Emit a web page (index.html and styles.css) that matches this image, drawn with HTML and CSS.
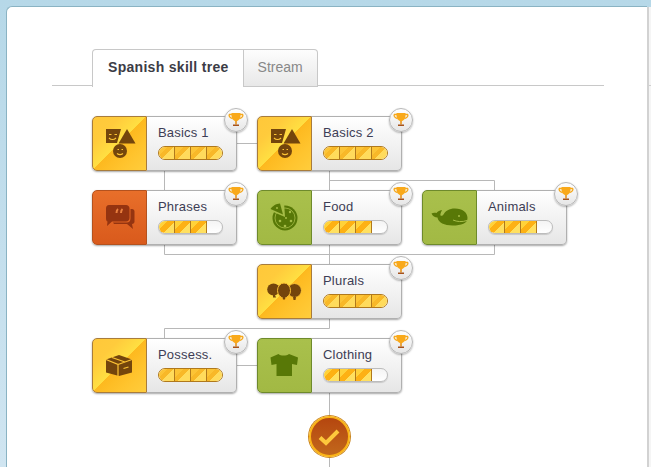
FILE: index.html
```html
<!DOCTYPE html>
<html lang="en">
<head>
  <meta charset="UTF-8">
  <meta name="viewport" content="width=device-width, initial-scale=1.0">
  <title>Spanish skill tree</title>
  <link rel="stylesheet" href="styles.css">
</head>
<body>
  <svg class="defs" width="0" height="0">
    <symbol id="trophy" viewBox="0 0 16 16">
      <path d="M1 2.500h3M12 2.500h3M1 2.500c0 2.600 1.500 3.600 3.600 4M15 2.500c0 2.600-1.500 3.600-3.600 4" fill="none" stroke="#f5a81c" stroke-width="1.300"/>
      <path d="M3.500 1h9v3c0 3-2 4.800-4.500 5.200C5.500 8.800 3.500 7 3.500 4z" fill="#f9a91a"/>
      <path d="M7.200 9h1.600v3.500H7.200z" fill="#e8941a"/>
      <path d="M5 12.500h6V14H5z" fill="#a5521c"/>
    </symbol>
    <symbol id="shapes" viewBox="0 0 54 54">
      <path class="fg" d="M14 13h15l-4 14H14z"/>
      <path class="fg" d="M35 13l8.500 14.500H26.500z"/>
      <circle class="fg" cx="28" cy="35" r="7"/>
      <path class="cut" d="M17 18.500h2.500M22.500 18.500h2.500M17 22c2 2 5 2 7 0M25.500 33.500h1.500M29.500 33.500h1.500M25 37.500c2 1.500 4 1.500 6 0"/>
    </symbol>
  </svg>

  <div class="window">
    <div class="panel">
      <div class="tabs">
        <a class="tab active">Spanish skill tree</a>
        <a class="tab">Stream</a>
      </div>

      <div class="tree">
        <svg class="lines" width="420" height="360">
          <path d="M145 27.500H165M72.500 55V138.500H402.500V64.500H237.500M237.500 55V148M237.500 200V212.500H72.500V222M145 249.500H165M237.500 277V360"/>
        </svg>

        <div class="skill c1">
          <div class="skill-icon gold">
            <svg viewBox="0 0 54 54"><use href="#shapes"/></svg>
          </div>
          <div class="skill-body">
            <div class="name">Basics 1</div>
            <div class="bar"><i></i><i></i><i></i><i></i></div>
          </div>
          <div class="badge"><svg><use href="#trophy"/></svg></div>
        </div>

        <div class="skill c2">
          <div class="skill-icon gold">
            <svg viewBox="0 0 54 54"><use href="#shapes"/></svg>
          </div>
          <div class="skill-body">
            <div class="name">Basics 2</div>
            <div class="bar"><i></i><i></i><i></i><i></i></div>
          </div>
          <div class="badge"><svg><use href="#trophy"/></svg></div>
        </div>

        <div class="skill c1">
          <div class="skill-icon orange">
            <svg viewBox="0 0 54 54">
              <path class="fg" d="M38.500 19h1.500c1.500 0 2.500 1 2.500 2.500v10c0 1.500-1 2.500-2.500 2.500l1 5-6-5H22l-1-1.500h14c2 0 3.500-1.500 3.500-4z"/>
              <path class="fg" d="M17 15h17c2 0 3.500 1.500 3.500 3.500V28c0 2-1.500 3.500-3.500 3.500H20l-5 4.500 .5-4.500c-1 0-1.500-1.500-1.500-3.500v-9.500c0-2 1-3.500 3-3.500z"/>
              <path class="cut-o" d="M26 19c-1 .8-1.500 1.800-1.500 4M30.500 19c-1 .8-1.500 1.800-1.500 4"/>
            </svg>
          </div>
          <div class="skill-body">
            <div class="name">Phrases</div>
            <div class="bar part"><i></i><i></i><i></i></div>
          </div>
          <div class="badge"><svg><use href="#trophy"/></svg></div>
        </div>

        <div class="skill c2">
          <div class="skill-icon green">
            <svg viewBox="0 0 54 54">
              <circle class="fg" cx="28" cy="28" r="12.500"/>
              <circle class="ring" cx="28" cy="28" r="10"/>
              <path class="wedge" d="M28 27L14 21 16 12 27 12z"/>
              <path class="fg" d="M26 24.500L13.500 19c1.500-2.500 5.500-5.500 9.500-5.500z"/>
              <circle class="dot" cx="23" cy="31" r="1.300"/>
              <circle class="dot" cx="28" cy="36" r="1.300"/>
              <circle class="dot" cx="34" cy="31" r="1.300"/>
              <circle class="dot" cx="33" cy="22" r="1.200"/>
              <circle class="dot" cx="20" cy="18" r="1"/>
              <circle class="dot" cx="29" cy="28" r="1"/>
            </svg>
          </div>
          <div class="skill-body">
            <div class="name">Food</div>
            <div class="bar part"><i></i><i></i><i></i></div>
          </div>
          <div class="badge"><svg><use href="#trophy"/></svg></div>
        </div>

        <div class="skill c3">
          <div class="skill-icon green">
            <svg viewBox="0 0 54 54">
              <path class="fg" d="M45.500 28c0-5.500-5-9.500-12.500-9.500-6 0-9.500 2.500-11.500 6-1 1.500-2 1.500-3 1-.5-1 .5-3 1.500-5.500-3 .5-4.500 1.500-5.500 3-1.500-.5-3.500-.5-5 .5 1 2.500 3.500 4 6 4 .5 5 7 8 15 8 9 0 15-2 15-7.500z"/>
              <path class="cut-g" d="M31 30c4 1.800 9 2.200 14 .5"/>
              <circle class="dot" cx="37" cy="26" r="1"/>
            </svg>
          </div>
          <div class="skill-body">
            <div class="name">Animals</div>
            <div class="bar part"><i></i><i></i><i></i></div>
          </div>
          <div class="badge"><svg><use href="#trophy"/></svg></div>
        </div>

        <div class="skill c2">
          <div class="skill-icon gold">
            <svg viewBox="0 0 54 54">
              <ellipse class="fg" cx="16.500" cy="25.500" rx="6.300" ry="6"/>
              <path class="fg" d="M16 31h2l1 2.500h-3z"/>
              <ellipse class="fg balloon" cx="37.500" cy="26.500" rx="7" ry="7"/>
              <path class="fg" d="M36 33h3l-.5 3h-2z"/>
              <ellipse class="fg balloon" cx="27" cy="26.500" rx="6.500" ry="7.500"/>
              <path class="fg" d="M25.500 33h3l-.5 2.500h-2z"/>
            </svg>
          </div>
          <div class="skill-body">
            <div class="name">Plurals</div>
            <div class="bar"><i></i><i></i><i></i><i></i></div>
          </div>
          <div class="badge"><svg><use href="#trophy"/></svg></div>
        </div>

        <div class="skill c1">
          <div class="skill-icon gold">
            <svg viewBox="0 0 54 54">
              <path class="fg" d="M27 17l13 4.500v13L27 38l-13-3.500v-13z"/>
              <path class="cut" d="M14 21.500L26 26.500v11.500M26 26.500l14-5M20 19.500l13 4.500"/>
              <path class="cut" d="M31.500 30.500l5-1.500"/>
            </svg>
          </div>
          <div class="skill-body">
            <div class="name">Possess.</div>
            <div class="bar"><i></i><i></i><i></i><i></i></div>
          </div>
          <div class="badge"><svg><use href="#trophy"/></svg></div>
        </div>

        <div class="skill c2">
          <div class="skill-icon green">
            <svg viewBox="0 0 54 54">
              <path class="fg" d="M21.500 16c2 2 8 2 10.500 0l9 3.500-1 7.500-5-1v12H19.500V26l-5 1-1-7.500z"/>
            </svg>
          </div>
          <div class="skill-body">
            <div class="name">Clothing</div>
            <div class="bar part"><i></i><i></i><i></i></div>
          </div>
          <div class="badge"><svg><use href="#trophy"/></svg></div>
        </div>

        <div class="checkpoint c2">
          <svg viewBox="0 0 24 24" width="24" height="24">
            <path d="M3 12.500l6 5.500L21 6" fill="none" stroke="#fdc83c" stroke-width="4"/>
          </svg>
        </div>
      </div>
    </div>
    <div class="edge"></div>
  </div>
</body>
</html>
```

FILE: styles.css
```css
html, body {
  height: 100%;
}

body {
  margin: 0;
  padding: 6px 0 0 6px;
  box-sizing: border-box;
  overflow: hidden;
  font-family: "Liberation Sans", Arial, sans-serif;
  background: linear-gradient(#b6d8e8, #d0e5f1);
}

.defs {
  position: absolute;
}

.window {
  display: flex;
  height: 100%;
}

.panel {
  flex: 1;
  padding-top: 42px;
  background: white;
  border: 1px solid #8ab3c3;
  border-width: 1px 0 0 1px;
  border-radius: 6px 0 0 0;
  overflow: hidden;
}

.edge {
  width: 2px;
  margin-top: 1px;
  background: linear-gradient(#f5f5f5 78px, #cfcfcf 78px 79px, #f5f5f5 79px);
  border-left: 2px solid #d2d2d2;
}

/* tabs */
.tabs {
  display: flex;
  height: 36px;
  margin: 0 43px 0 45px;
  padding-left: 40px;
  border-bottom: 1px solid #c8c8c8;
}

.tab {
  height: 36px;
  padding: 0 14px;
  line-height: 35px;
  font-size: 14px;
  color: #888;
  background: linear-gradient(#fdfdfd, #e8e8e8);
  border: 1px solid #c8c8c8;
  border-left: none;
  border-radius: 0 4px 0 0;
}

.tab.active {
  height: 37px;
  padding: 0 14px 0 15px;
  font-weight: bold;
  letter-spacing: .3px;
  color: #3c3c46;
  background: white;
  border-left: 1px solid #c8c8c8;
  border-bottom: none;
  border-radius: 4px 0 0 0;
}

/* tree */
.tree {
  position: relative;
  display: grid;
  grid-template-columns: repeat(3, 145px);
  grid-auto-rows: 55px;
  gap: 19px 20px;
  margin: 30px 0 0 85px;
}

.lines {
  position: absolute;
  top: 0;
  left: 0;
}

.lines path {
  fill: none;
  stroke: #b8b8b8;
  stroke-width: 1;
}

.c1 { grid-column: 1; }
.c2 { grid-column: 2; }
.c3 { grid-column: 3; }

.skill {
  position: relative;
  display: flex;
  border-radius: 5px;
  box-shadow: 0 1px 2px rgba(0, 0, 0, 0.35);
}

.skill-icon {
  width: 55px;
  box-sizing: border-box;
  border: 1px solid;
  border-radius: 5px 0 0 5px;
}

.skill-icon svg {
  display: block;
  width: 54px;
  height: 54px;
  margin: -1px;
}

.gold {
  border-color: #a87c3c;
  background: linear-gradient(135deg, #ffc83a 0, #ffcb3c 25%, #ffdf42 49%, #fdb91f 50%, #ffc42e 75%, #ffcd3c 100%);
}

.orange {
  border-color: #b4521e;
  background: linear-gradient(#e86f2a, #d95a1c);
}

.green {
  border-color: #6e8a2c;
  background: linear-gradient(#a9c04c, #a2b944);
}

.fg { fill: #74450c; }
.orange .fg { fill: #953410; }
.green .fg { fill: #587807; }

.balloon {
  stroke: #fdc334;
  stroke-width: 1;
}

.cut {
  fill: none;
  stroke: #fdc334;
  stroke-width: 1.2;
}

.cut-o {
  fill: none;
  stroke: #e8803f;
  stroke-width: 2;
}

.cut-g {
  fill: none;
  stroke: #a6bd48;
  stroke-width: 1;
}

.ring {
  fill: none;
  stroke: #a6bd48;
  stroke-width: .8;
}

.wedge { fill: #a6bd48; }
.dot { fill: #a6bd48; }

.skill-body {
  flex: 1;
  padding: 8px 0 0 11px;
  background: linear-gradient(#ffffff, #e6e6e6);
  border: 1px solid #b0b0b0;
  border-left: none;
  border-radius: 0 5px 5px 0;
}

.name {
  height: 21px;
  font-size: 13px;
  line-height: 15px;
  letter-spacing: .2px;
  color: #3d3d55;
}

/* progress */
.bar {
  display: flex;
  width: 63px;
  height: 12px;
  background: linear-gradient(#f4f4f4, #ffffff);
  border: 1px solid #b0791c;
  border-radius: 7px;
  overflow: hidden;
}

.bar.part {
  border-color: #bcbcbc;
  box-shadow: 0 1px 1px rgba(0, 0, 0, 0.15);
}

.bar i {
  width: 15px;
  border-right: 1px solid #b0791c;
  background: linear-gradient(135deg, #fcc436 0 30%, #f8b828 30% 55%, #ffdb5c 55%);
}

.bar i:last-child {
  border-right: none;
}

.bar.part i {
  background: linear-gradient(135deg, #ffd23a 0 30%, #fdb114 30% 60%, #ffe060 60%);
}

.bar.part i:last-child {
  border-right: 1px solid #b0791c;
}

.badge {
  position: absolute;
  top: -8px;
  left: 132px;
  display: flex;
  align-items: center;
  justify-content: center;
  width: 22px;
  height: 22px;
  background: linear-gradient(#ffffff, #e6e6e6);
  border: 1px solid #b8b8b8;
  border-radius: 50%;
  box-shadow: 0 1px 2px rgba(0, 0, 0, 0.3);
}

.badge svg {
  width: 16px;
  height: 16px;
}

.checkpoint {
  position: relative;
  display: flex;
  align-items: center;
  justify-content: center;
  justify-self: center;
  width: 37px;
  height: 37px;
  margin: 4px 0 0 -1px;
  background: linear-gradient(#b5460f, #c2681c);
  border: 2px solid #fbb416;
  border-radius: 50%;
  box-shadow: 0 0 0 1px #c9841c;
}
```
